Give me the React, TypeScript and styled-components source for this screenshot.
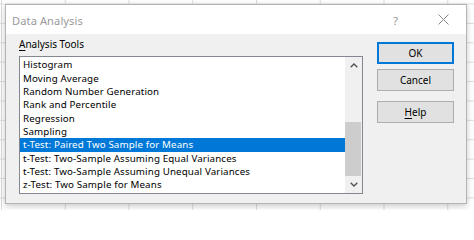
import React from "react";
import styled, { createGlobalStyle } from "styled-components";

const Global = createGlobalStyle`
  html, body { margin: 0; padding: 0; background: #fff; }
  body { font-family: "Noto Sans", "Open Sans", Arial, sans-serif; }
`;

const Desktop = styled.div`
  width: 474px;
  height: 210px;
  overflow: hidden;
  box-sizing: border-box;
  padding: 4px 0 0 5px;
  background-color: #fff;
  background-image:
    linear-gradient(to right, #dcdcdc 1px, transparent 1px),
    linear-gradient(to bottom, #dcdcdc 1px, transparent 1px);
  background-size: 63.75px 19.4px;
  background-position: 1px 3.5px;
`;

const Dialog = styled.div`
  width: 462px;
  height: 200px;
  box-sizing: border-box;
  border: 1px solid #b4b4b4;
  background: #f0f0f0;
  box-shadow: 0 2px 6px rgba(0, 0, 0, 0.22);
  display: flex;
  flex-direction: column;
`;

const TitleBar = styled.div`
  height: 29px;
  background: #fff;
  display: flex;
  align-items: center;
  padding: 0 0 0 6px;
  flex: none;
`;

const Title = styled.div`
  flex: 1;
  font-size: 11.1px;
  color: #9a9a9a;
  letter-spacing: 0.1px;
  padding-top: 1px;
`;

const Help = styled.div`
  width: 10px;
  font-size: 11.5px;
  color: #9a9a9a;
  margin-right: 34px;
  padding-top: 1px;
`;

const CloseBox = styled.div`
  width: 12px;
  height: 12px;
  margin-right: 17px;
  display: flex;
  align-items: center;
  justify-content: center;
`;

const Body = styled.div`
  flex: 1;
  display: flex;
  padding: 2px 12px 0 13px;
  gap: 14px;
`;

const LeftCol = styled.div`
  width: 344px;
  display: flex;
  flex-direction: column;
`;

const Label = styled.div`
  height: 16px;
  line-height: 16px;
  font-size: 10px;
  color: #000;
  margin-bottom: 4px;
  u { text-underline-offset: 1.5px; }
`;

const ListBox = styled.div`
  width: 344px;
  height: 138px;
  box-sizing: border-box;
  border: 1px solid #828790;
  background: #fff;
  display: flex;
`;

const Items = styled.div`
  flex: 1;
  padding-top: 1.3px;
  display: flex;
  flex-direction: column;
`;

const Item = styled.div<{ $selected?: boolean }>`
  height: 13.33px;
  line-height: 13.33px;
  font-size: 9.75px;
  letter-spacing: 0.13px;
  padding-left: 3px;
  white-space: nowrap;
  color: ${(p) => (p.$selected ? "#fff" : "#000")};
  background: ${(p) => (p.$selected ? "#0078d7" : "transparent")};
`;

const ScrollBar = styled.div`
  width: 17px;
  background: #f0f0f0;
  display: flex;
  flex-direction: column;
`;

const ScrollBtn = styled.div`
  height: 17px;
  display: flex;
  align-items: center;
  justify-content: center;
  flex: none;
`;

const Track = styled.div`
  flex: 1;
  display: flex;
  flex-direction: column;
  justify-content: flex-end;
`;

const Thumb = styled.div`
  height: 54px;
  margin: 0 1px 0 0;
  background: #cdcdcd;
`;

const RightCol = styled.div`
  width: 77px;
  display: flex;
  flex-direction: column;
  padding-top: 6px;
`;

const Button = styled.button<{ $default?: boolean; $gap?: number }>`
  height: 22px;
  width: 77px;
  box-sizing: border-box;
  margin-bottom: ${(p) => p.$gap ?? 0}px;
  background: #e1e1e1;
  border: ${(p) => (p.$default ? "2px solid #0078d7" : "1px solid #adadad")};
  font-family: "Noto Sans", "Open Sans", Arial, sans-serif;
  font-size: 10px;
  color: #000;
  padding: 0;
  line-height: 18px;
  u { text-underline-offset: 1.5px; }
`;

const items = [
  "Histogram",
  "Moving Average",
  "Random Number Generation",
  "Rank and Percentile",
  "Regression",
  "Sampling",
  "t-Test: Paired Two Sample for Means",
  "t-Test: Two-Sample Assuming Equal Variances",
  "t-Test: Two-Sample Assuming Unequal Variances",
  "z-Test: Two Sample for Means",
];

const Chevron = ({ up }: { up?: boolean }) => (
  <svg width="8" height="5" viewBox="0 0 8 5">
    <path
      d={up ? "M0.7 4.3 L4 1 L7.3 4.3" : "M0.7 0.7 L4 4 L7.3 0.7"}
      fill="none"
      stroke="#505050"
      strokeWidth="1.3"
    />
  </svg>
);

export default function App() {
  return (
    <>
      <Global />
      <Desktop>
        <Dialog>
          <TitleBar>
            <Title>Data Analysis</Title>
            <Help>?</Help>
            <CloseBox>
              <svg width="11" height="11" viewBox="0 0 11 11">
                <path d="M0.5 0.5 L10.5 10.5 M10.5 0.5 L0.5 10.5" stroke="#8a8a8a" strokeWidth="1" fill="none" />
              </svg>
            </CloseBox>
          </TitleBar>
          <Body>
            <LeftCol>
              <Label>
                <u>A</u>nalysis Tools
              </Label>
              <ListBox>
                <Items>
                  {items.map((t, i) => (
                    <Item key={t} $selected={i === 6}>
                      {t}
                    </Item>
                  ))}
                </Items>
                <ScrollBar>
                  <ScrollBtn>
                    <Chevron up />
                  </ScrollBtn>
                  <Track>
                    <Thumb />
                  </Track>
                  <ScrollBtn>
                    <Chevron />
                  </ScrollBtn>
                </ScrollBar>
              </ListBox>
            </LeftCol>
            <RightCol>
              <Button $default $gap={5}>OK</Button>
              <Button $gap={10}>Cancel</Button>
              <Button>
                <u>H</u>elp
              </Button>
            </RightCol>
          </Body>
        </Dialog>
      </Desktop>
    </>
  );
}
